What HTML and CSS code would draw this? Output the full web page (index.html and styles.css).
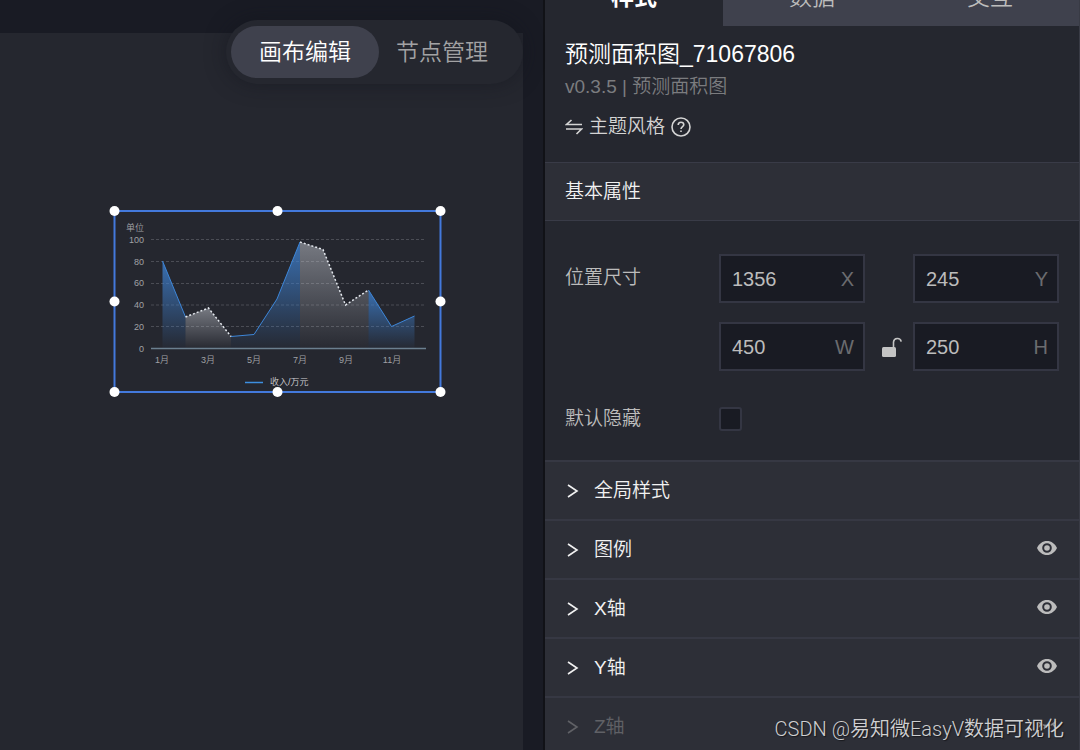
FILE: index.html
```html
<!DOCTYPE html>
<html lang="zh-CN">
<head>
  <meta charset="UTF-8">
  <title>预测面积图_71067806</title>
  <link rel="stylesheet" href="styles.css">
</head>
<body>

<main class="stage">
  <div class="canvas">
    <!-- selected chart node -->
    <div class="node">
      <svg class="chart" width="327" height="182" viewBox="0 0 327 182">
        <defs>
          <linearGradient id="blueFill" x1="0" y1="0" x2="0" y2="1">
            <stop offset="0" stop-color="#3f82d2" stop-opacity="0.8"/>
            <stop offset="1" stop-color="#3f82d2" stop-opacity="0.03"/>
          </linearGradient>
          <linearGradient id="greyFill" x1="0" y1="0" x2="0" y2="1">
            <stop offset="0" stop-color="#c8ccd4" stop-opacity="0.5"/>
            <stop offset="1" stop-color="#c8ccd4" stop-opacity="0.02"/>
          </linearGradient>
        </defs>

        <g class="grid">
          <path d="M37 28.5H312M37 50.5H312M37 72.5H312M37 94H312M37 115.5H312"/>
        </g>

        <g fill="url(#blueFill)">
          <path d="M48.5 50L71.5 106V137H48.5Z"/>
          <path d="M117 125.5L140 123.5L163 88L186 31V137H117Z"/>
          <path d="M254.5 79L277.5 115.5L300.5 105V137H254.5Z"/>
        </g>
        <g fill="url(#greyFill)">
          <path d="M71.5 106L94.5 97L117 125.5V137H71.5Z"/>
          <path d="M186 31L209 38.5L231.5 94L254.5 79V137H186Z"/>
        </g>

        <path class="axis" d="M37 137.5H312"/>

        <g class="line">
          <path d="M48.5 50L71.5 106"/>
          <path d="M117 125.5L140 123.5L163 88L186 31"/>
          <path d="M254.5 79L277.5 115.5L300.5 105"/>
        </g>
        <g class="forecast">
          <path d="M71.5 106L94.5 97L117 125.5"/>
          <path d="M186 31L209 38.5L231.5 94L254.5 79"/>
        </g>

        <g class="tick" text-anchor="end">
          <text x="30" y="20">单位</text>
          <text x="30" y="32">100</text>
          <text x="30" y="54">80</text>
          <text x="30" y="75">60</text>
          <text x="30" y="97">40</text>
          <text x="30" y="119">20</text>
          <text x="30" y="141">0</text>
        </g>
        <g class="tick" text-anchor="middle">
          <text x="48" y="152">1月</text>
          <text x="94" y="152">3月</text>
          <text x="140" y="152">5月</text>
          <text x="186" y="152">7月</text>
          <text x="232" y="152">9月</text>
          <text x="278" y="152">11月</text>
        </g>

        <path class="legend-line" d="M131 171.5H149"/>
        <text class="legend" x="156" y="174">收入/万元</text>

        <rect class="frame" x="0.5" y="0" width="326" height="181"/>
        <g class="handles">
          <circle cx="0.5" cy="0" r="5"/>
          <circle cx="163.5" cy="0" r="5"/>
          <circle cx="326.5" cy="0" r="5"/>
          <circle cx="0.5" cy="90.5" r="5"/>
          <circle cx="326.5" cy="90.5" r="5"/>
          <circle cx="0.5" cy="181" r="5"/>
          <circle cx="163.5" cy="181" r="5"/>
          <circle cx="326.5" cy="181" r="5"/>
        </g>
      </svg>
    </div>
  </div>

  <div class="switcher">
    <button class="switch active" type="button">画布编辑</button>
    <button class="switch" type="button">节点管理</button>
  </div>
</main>

<aside class="panel">
  <nav class="tabs">
    <button class="tab active" type="button">样式</button>
    <button class="tab" type="button">数据</button>
    <button class="tab" type="button">交互</button>
  </nav>

  <header class="info">
    <h1>预测面积图_71067806</h1>
    <p class="version">v0.3.5 | 预测面积图</p>
    <div class="theme">
      <svg width="18" height="16" viewBox="0 0 18 16" fill="none" stroke="currentColor" stroke-width="1.6">
        <path d="M6.5 1L1.5 5.5H17M1 10H16.5L11.5 15"/>
      </svg>
      <span>主题风格</span>
      <svg class="help" width="20" height="20" viewBox="0 0 20 20" fill="none" stroke="currentColor" stroke-width="1.6">
        <circle cx="10" cy="10" r="9"/>
        <path d="M7.2 8C7.2 6.2 8.4 5.2 10 5.2S12.8 6.3 12.8 7.8C12.8 9.6 10 9.8 10 12"/>
        <path d="M10 13.4V15"/>
      </svg>
    </div>
  </header>

  <h2 class="section-title">基本属性</h2>

  <div class="props">
    <div class="row">
      <span class="row-label">位置尺寸</span>
      <div class="fields">
        <div class="pair">
          <label class="field"><input type="text" value="1356"><span>X</span></label>
          <label class="field"><input type="text" value="245"><span>Y</span></label>
        </div>
        <div class="pair">
          <label class="field"><input type="text" value="450"><span>W</span></label>
          <button class="lock" type="button" aria-label="锁定比例">
            <svg width="20" height="20" viewBox="0 0 20 20">
              <rect x="0" y="10" width="14" height="10" rx="1.5" fill="currentColor"/>
              <path d="M11.5 10V5A3.9 3.9 0 0 1 19.2 4.6" fill="none" stroke="currentColor" stroke-width="1.6"/>
            </svg>
          </button>
          <label class="field"><input type="text" value="250"><span>H</span></label>
        </div>
      </div>
    </div>
    <div class="row">
      <label class="row-label" for="hidden">默认隐藏</label>
      <input class="check" type="checkbox" id="hidden">
    </div>
  </div>

  <div class="group">
    <button class="toggle" type="button">
      <svg class="arrow" viewBox="0 0 12 14"><path d="M1 1L10 7L1 13"/></svg>全局样式
    </button>
  </div>
  <div class="group">
    <button class="toggle" type="button">
      <svg class="arrow" viewBox="0 0 12 14"><path d="M1 1L10 7L1 13"/></svg>图例
    </button>
    <button class="eye" type="button" aria-label="显示图例">
      <svg viewBox="0 0 20 14"><path fill-rule="evenodd" d="M10 0C5.5 0 2 2.7 0 7C2 11.3 5.5 14 10 14S18 11.3 20 7C18 2.7 14.5 0 10 0ZM10 2.2A4.8 4.8 0 1 1 10 11.8A4.8 4.8 0 0 1 10 2.2Z"/><circle cx="10" cy="7" r="2.8"/></svg>
    </button>
  </div>
  <div class="group">
    <button class="toggle" type="button">
      <svg class="arrow" viewBox="0 0 12 14"><path d="M1 1L10 7L1 13"/></svg>X轴
    </button>
    <button class="eye" type="button" aria-label="显示X轴">
      <svg viewBox="0 0 20 14"><path fill-rule="evenodd" d="M10 0C5.5 0 2 2.7 0 7C2 11.3 5.5 14 10 14S18 11.3 20 7C18 2.7 14.5 0 10 0ZM10 2.2A4.8 4.8 0 1 1 10 11.8A4.8 4.8 0 0 1 10 2.2Z"/><circle cx="10" cy="7" r="2.8"/></svg>
    </button>
  </div>
  <div class="group">
    <button class="toggle" type="button">
      <svg class="arrow" viewBox="0 0 12 14"><path d="M1 1L10 7L1 13"/></svg>Y轴
    </button>
    <button class="eye" type="button" aria-label="显示Y轴">
      <svg viewBox="0 0 20 14"><path fill-rule="evenodd" d="M10 0C5.5 0 2 2.7 0 7C2 11.3 5.5 14 10 14S18 11.3 20 7C18 2.7 14.5 0 10 0ZM10 2.2A4.8 4.8 0 1 1 10 11.8A4.8 4.8 0 0 1 10 2.2Z"/><circle cx="10" cy="7" r="2.8"/></svg>
    </button>
  </div>
  <div class="group off">
    <button class="toggle" type="button">
      <svg class="arrow" viewBox="0 0 12 14"><path d="M1 1L10 7L1 13"/></svg>Z轴
    </button>
    <button class="eye" type="button" aria-label="显示Z轴">
      <svg viewBox="0 0 20 14"><path class="closed" d="M1 3C5 9 15 9 19 3M4 6L2 9M8 8L7 11M12 8L13 11M16 6L18 9"/></svg>
    </button>
  </div>
</aside>

<div class="watermark">CSDN @易知微EasyV数据可视化</div>

</body>
</html>
```

FILE: styles.css
```css
* {
  box-sizing: border-box;
}

body {
  margin: 0;
  display: flex;
  height: 100vh;
  overflow: hidden;
  position: relative;
  background: #191b24;
  color: #bcbcbc;
  font-family: "Liberation Sans", "Noto Sans CJK SC", sans-serif;
  font-weight: 350;
  font-size: 19px;
  line-height: 28px;
}

button, input {
  font: inherit;
  color: inherit;
  background: none;
  border: none;
  padding: 0;
  margin: 0;
}

button {
  cursor: pointer;
}

h1, h2, p {
  margin: 0;
  font-weight: inherit;
}

svg {
  display: block;
}

/* left side */
.stage {
  flex: 1;
  min-width: 0;
  position: relative;
  padding: 33px 20px 0 0;
  border-right: 2px solid #111217;
}

.canvas {
  position: relative;
  height: 100%;
  background: #25272f;
}

.node {
  position: absolute;
  left: 114px;
  top: 178px;
}

.chart {
  overflow: visible;
}

.grid path {
  fill: none;
  stroke: #4b4d55;
  stroke-dasharray: 3 2;
}

.axis {
  stroke: #6b7f8f;
  stroke-width: 1.5;
}

.line path {
  fill: none;
  stroke: #3d86d8;
}

.forecast path {
  fill: none;
  stroke: #e4e8ee;
  stroke-width: 1.5;
  stroke-dasharray: 2 2;
}

.tick {
  font-size: 9px;
  fill: #a0a1a5;
}

.legend {
  font-size: 9px;
  fill: #d0d1d4;
}

.legend-line {
  stroke: #3d8fe0;
  stroke-width: 1.5;
}

.frame {
  fill: none;
  stroke: #4379dc;
  stroke-width: 2;
}

.handles {
  fill: #fff;
}

.switcher {
  position: absolute;
  top: 20px;
  right: 20px;
  display: flex;
  padding: 6px 5px;
  border-radius: 32px;
  background: #25272f;
  box-shadow: 0 0 20px rgba(18, 19, 27, 0.5);
}

.switch {
  height: 52px;
  padding: 0 30px 0 17px;
  border-radius: 26px;
  font-size: 23px;
  color: #a2a2a4;
}

.switch.active {
  padding: 0 28px;
  background: #3f414d;
  color: #fff;
}

/* right side */
.panel {
  flex: 0 0 535px;
  background: #25272f;
  border-right: 1px solid #393b45;
}

.tabs {
  display: flex;
  margin-top: -32px;
}

.tab {
  flex: 1;
  height: 58px;
  font-size: 23px;
  background: #3f414d;
}

.tab.active {
  background: none;
  color: #fff;
  font-weight: bold;
}

.info {
  height: 136px;
  padding: 12px 20px 0;
}

.info h1 {
  font-size: 23px;
  line-height: 32px;
  color: #fff;
}

.version {
  margin-top: 3px;
  color: #7b7c7f;
}

.theme {
  display: flex;
  align-items: center;
  gap: 6px;
  margin-top: 12px;
  color: #d4d4d4;
}

.section-title {
  height: 59px;
  padding: 0 20px;
  font-size: 19px;
  line-height: 58px;
  color: #f2f2f2;
  background: #2d2f37;
  border: solid #393b47;
  border-width: 1px 0;
}

.props {
  display: flex;
  flex-direction: column;
  gap: 34px;
  padding: 33px 20px 27px;
}

.row {
  display: flex;
}

.row-label {
  flex: 0 0 154px;
}

.row:first-child .row-label {
  line-height: 48px;
}

.fields {
  flex: 1;
  display: flex;
  flex-direction: column;
  gap: 19px;
}

.pair {
  display: flex;
  align-items: center;
  justify-content: space-between;
}

.field {
  display: flex;
  align-items: center;
  width: 146px;
  height: 49px;
  padding: 0 9px 0 11px;
  font-size: 20px;
  background: #191b23;
  border: 2px solid #343643;
}

.field input {
  flex: 1;
  min-width: 0;
}

.field span {
  color: #6b6c6f;
}

.lock {
  padding-left: 5px;
  color: #c4c4c4;
}

.check {
  appearance: none;
  width: 23px;
  height: 24px;
  margin-top: 2px;
  background: #191b23;
  border: 2px solid #343643;
  border-radius: 3px;
}

.group {
  display: flex;
  align-items: center;
  height: 59px;
  padding: 0 22px;
  background: #2d2f37;
  border-top: 2px solid #363843;
  color: #f2f2f2;
}

.toggle {
  flex: 1;
  display: flex;
  align-items: center;
  gap: 15px;
  text-align: left;
}

.arrow {
  width: 12px;
  height: 14px;
  fill: none;
  stroke: currentColor;
  stroke-width: 1.6;
}

.eye {
  padding-bottom: 3px;
}

.eye svg {
  width: 20px;
  height: 14px;
  fill: #bcbcbc;
}

.eye .closed {
  fill: none;
  stroke: #8a8b8e;
  stroke-width: 1.6;
}

.off {
  color: #606166;
}

.watermark {
  position: absolute;
  right: 16px;
  bottom: 7px;
  font-family: Roboto, "Noto Sans CJK SC", sans-serif;
  font-size: 20px;
  color: #cfcfd0;
  text-shadow: 1px 1px 1px #17181d;
}
```
